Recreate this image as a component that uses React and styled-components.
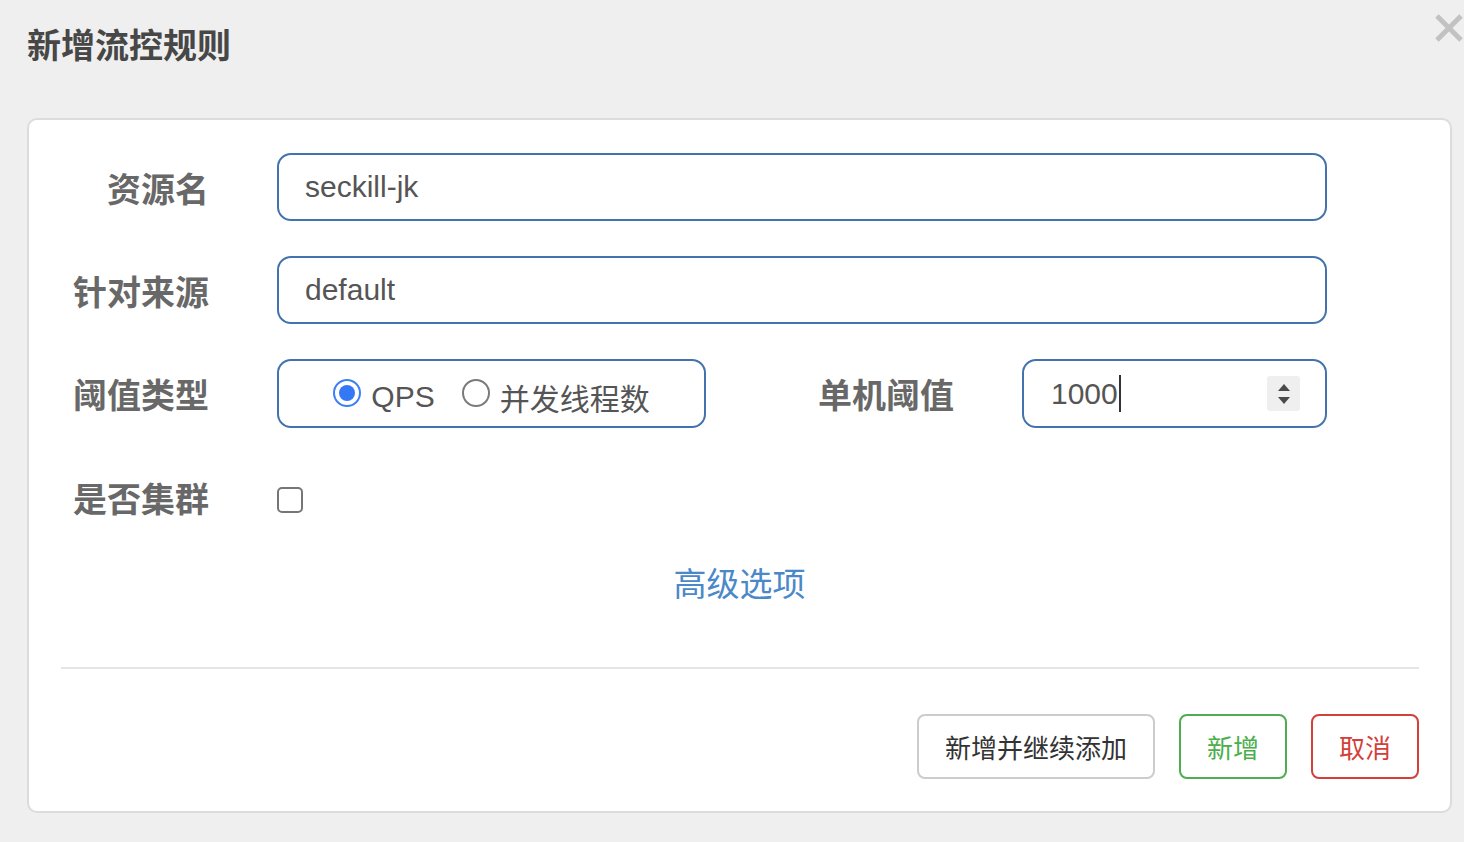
import React from "react";
import styled, { createGlobalStyle } from "styled-components";

const GlobalStyle = createGlobalStyle`
  html, body {
    margin: 0;
    padding: 0;
    background: #efefef;
  }
  body {
    font-family: "Liberation Sans", "Noto Sans CJK SC", sans-serif;
  }
  * {
    box-sizing: border-box;
  }
`;

const CJK = `"Liberation Sans", "Noto Sans CJK SC", sans-serif`;
const BLUE_BORDER = "#4373ae";

// Page / header
const Page = styled.div`
  width: 1464px;
  min-height: 842px;
  background: #efefef;
`;

const Header = styled.div`
  display: flex;
  justify-content: space-between;
  align-items: flex-start;
  height: 118px;
  padding-left: 27px;
`;

const Title = styled.h4`
  margin: 28px 0 0;
  font-family: ${CJK};
  font-size: 34px;
  line-height: 36px;
  font-weight: 700;
  color: #474747;
`;

const CloseButton = styled.button`
  margin-top: 13px;
  padding: 0;
  border: none;
  background: none;
  width: 30px;
  height: 30px;
  display: flex;
  cursor: pointer;
`;

// Panel
const Panel = styled.div`
  margin: 0 12px 0 27px;
  background: #fff;
  border: 2px solid #dcdcdc;
  border-radius: 10px;
  display: flex;
  flex-direction: column;
`;

const Form = styled.div`
  display: flex;
  flex-direction: column;
  gap: 35px;
  padding: 33px 123px 0 0;
`;

const Row = styled.div`
  display: flex;
  align-items: center;
  gap: 68px;
  height: ${(p) => p.$height || 68}px;
`;

const Label = styled.label`
  flex: 0 0 180px;
  text-align: right;
  font-family: ${CJK};
  font-size: 34px;
  font-weight: 700;
  color: #686868;
`;

const TextInput = styled.input`
  flex: 1;
  height: 68px;
  border: 2px solid ${BLUE_BORDER};
  border-radius: 14px;
  padding: 0 26px;
  font-family: ${CJK};
  font-size: 30px;
  color: #555;
  outline: none;
  background: #fff;
`;

const RadioBox = styled.div`
  flex: 0 0 429px;
  height: 69px;
  border: 2px solid ${BLUE_BORDER};
  border-radius: 14px;
  display: flex;
  align-items: center;
  justify-content: center;
  gap: 27px;
  padding-top: 6px;
`;

const RadioOption = styled.span`
  display: flex;
  align-items: center;
  gap: 10px;
  font-family: ${CJK};
  font-size: 30px;
  color: #555;
`;

const RadioDot = styled.span`
  width: 28px;
  height: 28px;
  margin-top: -8px;
  border-radius: 50%;
  border: 2px solid ${(p) => (p.checked ? "#3d80f5" : "#7a7a7a")};
  padding: 4px;
  background: ${(p) => (p.checked ? "#3478f6" : "#fff")};
  background-clip: content-box;
`;

const NumberField = styled.div`
  flex: 1;
  height: 69px;
  border: 2px solid ${BLUE_BORDER};
  border-radius: 14px;
  padding: 0 25px 0 27px;
  display: flex;
  align-items: center;
  font-family: ${CJK};
  font-size: 30px;
  color: #555;
`;

const Caret = styled.span`
  width: 2px;
  height: 37px;
  background: #333;
  margin-left: 1px;
`;

const Spinner = styled.span`
  margin-left: auto;
  width: 33px;
  height: 35px;
  background: #efefef;
  border-radius: 3px;
  display: flex;
  align-items: center;
  justify-content: center;
`;

const Checkbox = styled.span`
  width: 26px;
  height: 26px;
  margin-top: 6px;
  border: 2px solid #767676;
  border-radius: 5px;
  background: #fff;
`;

const AdvancedLink = styled.a`
  margin-top: 34px;
  text-align: center;
  font-family: ${CJK};
  font-size: 33px;
  line-height: 40px;
  color: #4a88c9;
  text-decoration: none;
  cursor: pointer;
`;

// Footer
const Footer = styled.div`
  margin: 62px 31px 0 32px;
  border-top: 2px solid #e5e5e5;
  padding: 45px 0 32px;
  display: flex;
  justify-content: flex-end;
  gap: 24px;
`;

const Button = styled.button`
  height: 65px;
  padding: 0 26px;
  background: #fff;
  border: 2px solid ${(p) => p.$border};
  border-radius: 8px;
  color: ${(p) => p.$color};
  font-family: ${CJK};
  font-size: 26px;
  cursor: pointer;
`;

function CloseIcon() {
  return (
    <svg width="30" height="30" viewBox="0 0 30 30">
      <path d="M3 3 L27 27 M27 3 L3 27" stroke="#c2c2c2" strokeWidth="5" strokeLinecap="butt" />
    </svg>
  );
}

function SpinnerIcon() {
  return (
    <svg width="14" height="24" viewBox="0 0 14 24">
      <path d="M7 2 L13 9 L1 9 Z" fill="#4a4a4a" />
      <path d="M1 15 L13 15 L7 22 Z" fill="#4a4a4a" />
    </svg>
  );
}

export default function App() {
  return (
    <Page>
      <GlobalStyle />
      <Header>
        <Title>新增流控规则</Title>
        <CloseButton aria-label="close">
          <CloseIcon />
        </CloseButton>
      </Header>
      <Panel>
        <Form>
          <Row>
            <Label>资源名</Label>
            <TextInput defaultValue="seckill-jk" />
          </Row>
          <Row>
            <Label>针对来源</Label>
            <TextInput defaultValue="default" />
          </Row>
          <Row $height={69}>
            <Label>阈值类型</Label>
            <RadioBox>
              <RadioOption>
                <RadioDot checked />
                QPS
              </RadioOption>
              <RadioOption>
                <RadioDot />
                并发线程数
              </RadioOption>
            </RadioBox>
            <Label>单机阈值</Label>
            <NumberField>
              1000
              <Caret />
              <Spinner>
                <SpinnerIcon />
              </Spinner>
            </NumberField>
          </Row>
          <Row>
            <Label>是否集群</Label>
            <Checkbox />
          </Row>
        </Form>
        <AdvancedLink>高级选项</AdvancedLink>
        <Footer>
          <Button $border="#cccccc" $color="#333">新增并继续添加</Button>
          <Button $border="#4cae4c" $color="#4cae4c">新增</Button>
          <Button $border="#d43f3a" $color="#d43f3a">取消</Button>
        </Footer>
      </Panel>
    </Page>
  );
}
